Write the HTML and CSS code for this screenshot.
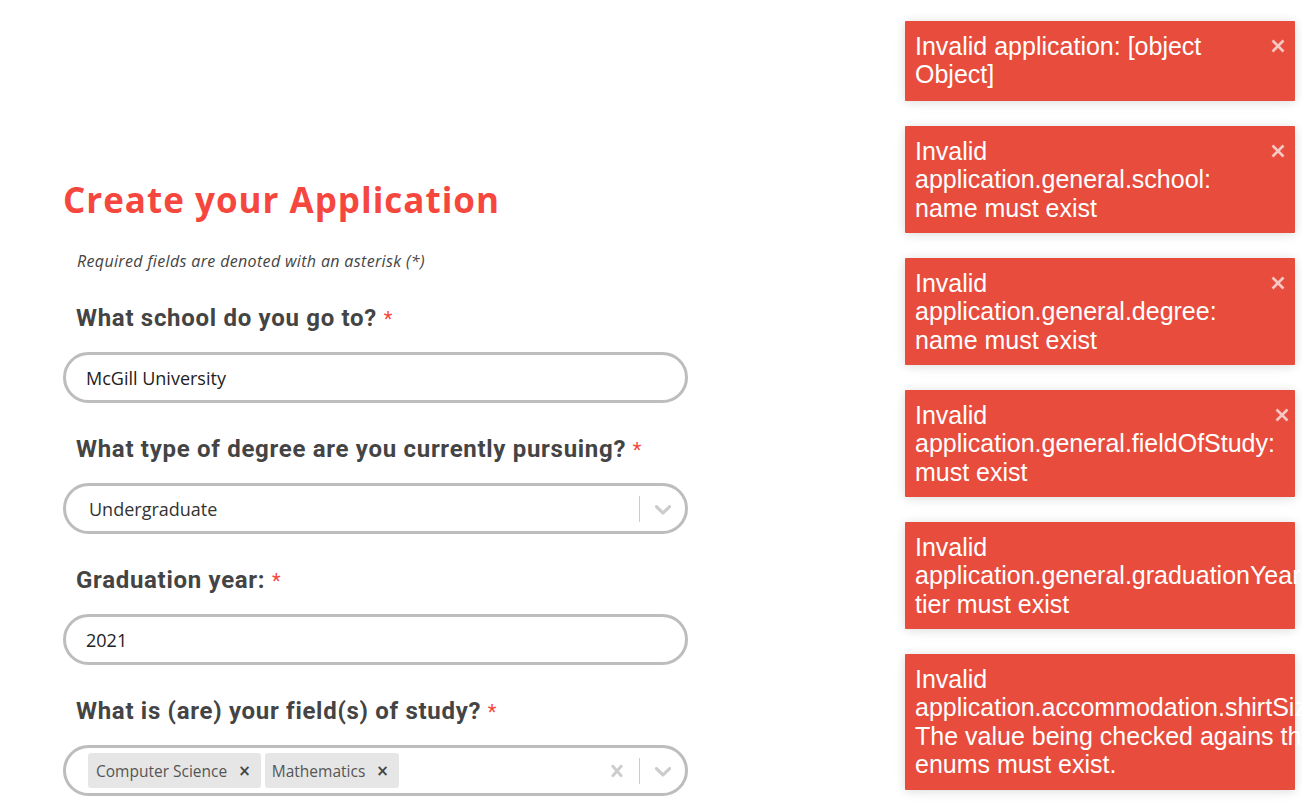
FILE: index.html
```html
<!DOCTYPE html>
<html lang="en">
<head>
<meta charset="utf-8">
<title>Create your Application</title>
<link rel="stylesheet" href="styles.css">
</head>
<body>
<main class="page">
  <h1 class="title">Create your Application</h1>
  <p class="note">Required fields are denoted with an asterisk (*)</p>

  <div class="field">
    <label class="label">What school do you go to? <span class="req">*</span></label>
    <div class="control"><span class="value">McGill University</span></div>
  </div>

  <div class="field">
    <label class="label">What type of degree are you currently pursuing? <span class="req">*</span></label>
    <div class="control select">
      <span class="value value-select">Undergraduate</span>
      <div class="indicators">
        <span class="sep"></span>
        <svg class="chev" width="28" height="28" viewBox="0 0 20 20"><path fill="#cccccc" d="M4.516 7.548c0.436-0.446 1.043-0.481 1.576 0l3.908 3.747 3.908-3.747c0.533-0.481 1.141-0.446 1.574 0 0.436 0.445 0.408 1.197 0 1.615-0.406 0.418-4.695 4.502-4.695 4.502-0.217 0.223-0.502 0.335-0.787 0.335s-0.57-0.112-0.789-0.335c0 0-4.287-4.084-4.695-4.502s-0.436-1.170 0-1.615z"/></svg>
      </div>
    </div>
  </div>

  <div class="field">
    <label class="label">Graduation year: <span class="req">*</span></label>
    <div class="control"><span class="value">2021</span></div>
  </div>

  <div class="field">
    <label class="label">What is (are) your field(s) of study? <span class="req">*</span></label>
    <div class="control select multi">
      <div class="chips">
        <span class="chip"><span class="chip-text">Computer Science</span><span class="chip-x">×</span></span>
        <span class="chip"><span class="chip-text">Mathematics</span><span class="chip-x">×</span></span>
      </div>
      <div class="indicators">
        <svg class="clear" width="24" height="24" viewBox="0 0 20 20"><path fill="#cccccc" d="M14.348 14.849c-0.469 0.469-1.229 0.469-1.697 0l-2.651-3.030-2.651 3.029c-0.469 0.469-1.229 0.469-1.697 0-0.469-0.469-0.469-1.229 0-1.697l2.758-3.150-2.759-3.152c-0.469-0.469-0.469-1.228 0-1.697s1.228-0.469 1.697 0l2.652 3.031 2.651-3.031c0.469-0.469 1.228-0.469 1.697 0s0.469 1.229 0 1.697l-2.758 3.152 2.758 3.150c0.469 0.469 0.469 1.229 0 1.698z"/></svg>
        <span class="sep"></span>
        <svg class="chev" width="28" height="28" viewBox="0 0 20 20"><path fill="#cccccc" d="M4.516 7.548c0.436-0.446 1.043-0.481 1.576 0l3.908 3.747 3.908-3.747c0.533-0.481 1.141-0.446 1.574 0 0.436 0.445 0.408 1.197 0 1.615-0.406 0.418-4.695 4.502-4.695 4.502-0.217 0.223-0.502 0.335-0.787 0.335s-0.57-0.112-0.789-0.335c0 0-4.287-4.084-4.695-4.502s-0.436-1.170 0-1.615z"/></svg>
      </div>
    </div>
  </div>
</main>

<div class="toasts">
  <div class="toast">
    <div class="toast-msg">Invalid application: [object Object]</div>
    <button class="toast-close" type="button"><svg width="14" height="14" viewBox="0 0 14 14"><path d="M1.5 1.5 L12.5 12.5 M12.5 1.5 L1.5 12.5" fill="none" stroke="currentColor" stroke-width="2.6"/></svg></button>
  </div>
  <div class="toast">
    <div class="toast-msg">Invalid application.general.school: name must exist</div>
    <button class="toast-close" type="button"><svg width="14" height="14" viewBox="0 0 14 14"><path d="M1.5 1.5 L12.5 12.5 M12.5 1.5 L1.5 12.5" fill="none" stroke="currentColor" stroke-width="2.6"/></svg></button>
  </div>
  <div class="toast">
    <div class="toast-msg">Invalid application.general.degree: name must exist</div>
    <button class="toast-close" type="button"><svg width="14" height="14" viewBox="0 0 14 14"><path d="M1.5 1.5 L12.5 12.5 M12.5 1.5 L1.5 12.5" fill="none" stroke="currentColor" stroke-width="2.6"/></svg></button>
  </div>
  <div class="toast">
    <div class="toast-msg">Invalid application.general.fieldOfStudy: must exist</div>
    <button class="toast-close" type="button"><svg width="14" height="14" viewBox="0 0 14 14"><path d="M1.5 1.5 L12.5 12.5 M12.5 1.5 L1.5 12.5" fill="none" stroke="currentColor" stroke-width="2.6"/></svg></button>
  </div>
  <div class="toast">
    <div class="toast-msg">Invalid application.general.graduationYear: tier must exist</div>
    <button class="toast-close" type="button"><svg width="14" height="14" viewBox="0 0 14 14"><path d="M1.5 1.5 L12.5 12.5 M12.5 1.5 L1.5 12.5" fill="none" stroke="currentColor" stroke-width="2.6"/></svg></button>
  </div>
  <div class="toast">
    <div class="toast-msg">Invalid application.accommodation.shirtSize: The value being checked agains the enums must exist.</div>
    <button class="toast-close" type="button"><svg width="14" height="14" viewBox="0 0 14 14"><path d="M1.5 1.5 L12.5 12.5 M12.5 1.5 L1.5 12.5" fill="none" stroke="currentColor" stroke-width="2.6"/></svg></button>
  </div>
</div>
</body>
</html>
```

FILE: styles.css
```css
html, body {
  margin: 0;
  padding: 0;
  background: #ffffff;
  overflow: hidden;
}

body {
  width: 1302px;
  height: 806px;
  position: relative;
  font-family: "Noto Sans", "Open Sans", sans-serif;
}

.page {
  width: 625px;
  padding: 178px 0 0 63px;
}

.title {
  margin: 0;
  font-family: "Open Sans", "Noto Sans", sans-serif;
  font-weight: 700;
  font-size: 35px;
  line-height: 44px;
  color: #f5473e;
  letter-spacing: 1px;
}

.note {
  margin: 29px 0 0 14px;
  font-family: "Open Sans", sans-serif;
  font-style: italic;
  font-weight: 400;
  font-size: 16px;
  line-height: 20px;
  letter-spacing: 0.35px;
  color: #444444;
}

.field {
  margin-top: 30px;
}

.field + .field {
  margin-top: 29px;
}

.label {
  display: block;
  height: 34px;
  margin-left: 13px;
  font-family: "Roboto", "Noto Sans", sans-serif;
  font-weight: 700;
  font-size: 24px;
  line-height: 34px;
  letter-spacing: 0.7px;
  color: #444444;
}

.req {
  color: #f5473e;
  font-weight: 400;
  font-size: 20px;
  line-height: 1;
  letter-spacing: 0;
}

.control {
  margin-top: 17px;
  box-sizing: border-box;
  height: 51px;
  border: 3px solid #bdbdbd;
  border-radius: 26px;
  display: flex;
  align-items: center;
  padding: 0 0 0 20px;
}

.value {
  font-family: "Open Sans", sans-serif;
  font-size: 18px;
  color: #222222;
}

.value-select {
  padding-left: 3px;
  color: #333333;
}

.select {
  justify-content: space-between;
}

.indicators {
  display: flex;
  align-items: center;
  height: 100%;
  padding-right: 8px;
}

.sep {
  width: 1px;
  height: 26px;
  background: #cccccc;
  margin-right: 9px;
}

.clear {
  margin-right: 10px;
}

.multi {
  padding-left: 22px;
}

.chips {
  display: flex;
  gap: 4px;
}

.chip {
  display: flex;
  align-items: center;
  height: 35px;
  padding: 0 10px 0 8px;
  background: #e6e6e6;
  border-radius: 3px;
  font-family: "Open Sans", sans-serif;
  font-size: 15.5px;
  color: #555555;
}

.chip + .chip {
  padding-left: 7px;
}

.chip-x {
  margin-left: 11px;
  font-family: "DejaVu Sans", sans-serif;
  font-weight: 700;
  font-size: 15px;
  color: #444444;
}

.toasts {
  position: absolute;
  top: 21px;
  left: 905px;
  width: 390px;
  display: flex;
  flex-direction: column;
  gap: 25px;
}

.toast {
  box-sizing: border-box;
  width: 390px;
  min-height: 80px;
  padding: 10.75px 10px;
  background: #e74c3c;
  border-radius: 1px;
  box-shadow: 0 1px 10px 0 rgba(0, 0, 0, 0.1), 0 2px 15px 0 rgba(0, 0, 0, 0.05);
  display: flex;
  align-items: flex-start;
  color: #ffffff;
}

.toast-msg {
  flex: 1 1 auto;
  font-family: "Liberation Sans", Arial, sans-serif;
  font-size: 25px;
  line-height: 28.5px;
}

.toast-close {
  flex: 0 0 auto;
  margin: 7px 0 0 0;
  padding: 0;
  border: 0;
  background: transparent;
  color: #ffffff;
  opacity: 0.7;
  line-height: 0;
}
```
